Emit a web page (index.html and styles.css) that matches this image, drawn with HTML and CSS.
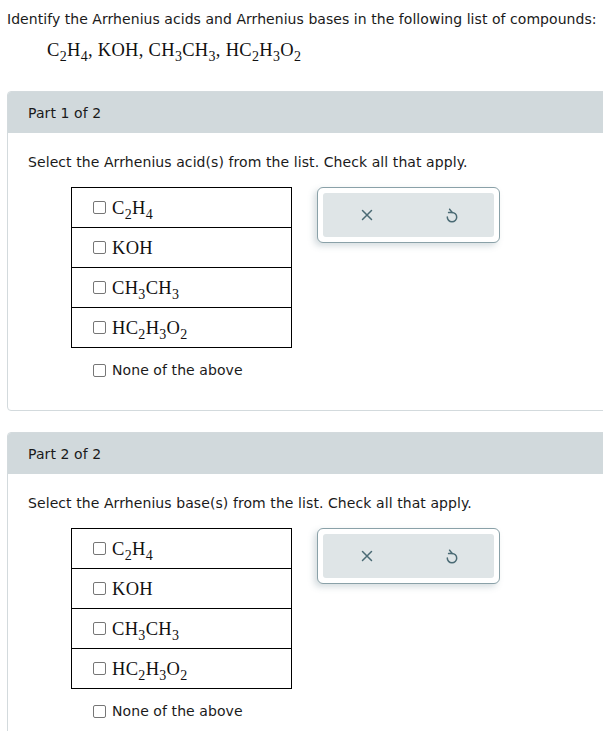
FILE: index.html
```html
<!DOCTYPE html>
<html>
<head>
<meta charset="utf-8">
<link rel="stylesheet" href="styles.css">
</head>
<body>
<div class="intro">
  <p class="title">Identify the Arrhenius acids and Arrhenius bases in the following list of compounds:</p>
  <p class="formula">C<sub>2</sub>H<sub>4</sub>, KOH, CH<sub>3</sub>CH<sub>3</sub>, HC<sub>2</sub>H<sub>3</sub>O<sub>2</sub></p>
</div>

<section class="panel">
  <div class="panel-head">Part 1 of 2</div>
  <div class="panel-body">
    <p class="question">Select the Arrhenius acid(s) from the list. Check all that apply.</p>
    <div class="answer-row">
      <div class="choices">
        <div class="choice"><span class="box"></span><span class="chem">C<sub>2</sub>H<sub>4</sub></span></div>
        <div class="choice"><span class="box"></span><span class="chem">KOH</span></div>
        <div class="choice"><span class="box"></span><span class="chem">CH<sub>3</sub>CH<sub>3</sub></span></div>
        <div class="choice"><span class="box"></span><span class="chem">HC<sub>2</sub>H<sub>3</sub>O<sub>2</sub></span></div>
      </div>
      <div class="tools">
        <div class="tools-inner">
          <svg class="icon" viewBox="0 0 16 16" width="16" height="16"><path d="M3.5 3.5 L12.5 12.5 M12.5 3.5 L3.5 12.5" stroke="#4a6a74" stroke-width="1.5" fill="none" stroke-linecap="round"/></svg>
          <svg class="icon" viewBox="0 0 16 16" width="16" height="16"><path d="M8 5.4 A4.7 4.7 0 1 1 3.3 10" stroke="#4a6a74" stroke-width="1.5" fill="none" stroke-linecap="round"/><path d="M5.6 2.2 L8.2 5.4 L4.6 5.6" stroke="#4a6a74" stroke-width="1.5" fill="none" stroke-linecap="round" stroke-linejoin="round"/></svg>
        </div>
      </div>
    </div>
    <div class="none"><span class="box"></span><span>None of the above</span></div>
  </div>
</section>

<section class="panel">
  <div class="panel-head">Part 2 of 2</div>
  <div class="panel-body">
    <p class="question">Select the Arrhenius base(s) from the list. Check all that apply.</p>
    <div class="answer-row">
      <div class="choices">
        <div class="choice"><span class="box"></span><span class="chem">C<sub>2</sub>H<sub>4</sub></span></div>
        <div class="choice"><span class="box"></span><span class="chem">KOH</span></div>
        <div class="choice"><span class="box"></span><span class="chem">CH<sub>3</sub>CH<sub>3</sub></span></div>
        <div class="choice"><span class="box"></span><span class="chem">HC<sub>2</sub>H<sub>3</sub>O<sub>2</sub></span></div>
      </div>
      <div class="tools">
        <div class="tools-inner">
          <svg class="icon" viewBox="0 0 16 16" width="16" height="16"><path d="M3.5 3.5 L12.5 12.5 M12.5 3.5 L3.5 12.5" stroke="#4a6a74" stroke-width="1.5" fill="none" stroke-linecap="round"/></svg>
          <svg class="icon" viewBox="0 0 16 16" width="16" height="16"><path d="M8 5.4 A4.7 4.7 0 1 1 3.3 10" stroke="#4a6a74" stroke-width="1.5" fill="none" stroke-linecap="round"/><path d="M5.6 2.2 L8.2 5.4 L4.6 5.6" stroke="#4a6a74" stroke-width="1.5" fill="none" stroke-linecap="round" stroke-linejoin="round"/></svg>
        </div>
      </div>
    </div>
    <div class="none"><span class="box"></span><span>None of the above</span></div>
  </div>
</section>
</body>
</html>
```

FILE: styles.css
```css
html, body {
  margin: 0;
  padding: 0;
  overflow: hidden;
  background: #fff;
}
body {
  font-family: "DejaVu Sans", Verdana, sans-serif;
  font-size: 14px;
  letter-spacing: 0.08px;
  color: #1a1a1a;
  line-height: 20px;
}
p { margin: 0; }

.intro {
  padding: 9px 0 0 7px;
}
.title {
  white-space: nowrap;
  letter-spacing: 0.05px;
}
.formula {
  font-family: "Liberation Serif", "Times New Roman", serif;
  font-size: 18.5px;
  letter-spacing: 0.3px;
  line-height: 24px;
  padding-left: 40px;
  margin-top: 9px;
  color: #111;
}
sub {
  font-size: 14px;
  vertical-align: -5px;
  line-height: 0;
}

.panel {
  margin: 29px -6px 21px 7px;
  border: 1px solid #d3dadd;
  border-radius: 4px;
  overflow: hidden;
}
.panel + .panel { margin-top: 0; }
.panel-head {
  background: #d1d9dc;
  height: 41px;
  line-height: 42px;
  padding-left: 20px;
}
.panel-body {
  padding: 19px 20px 30px 20px;
}
.answer-row {
  display: flex;
  align-items: flex-start;
  gap: 25px;
  margin: 15px 0 0 43px;
}
.choices {
  width: 219px;
  border: 1px solid #000;
}
.choice {
  height: 39px;
  display: flex;
  align-items: center;
  padding-left: 21px;
  border-bottom: 1px solid #000;
}
.choice:last-child { border-bottom: 0; }
.box {
  width: 11px;
  height: 11px;
  border: 1px solid #767676;
  border-radius: 2px;
  background: #fff;
  flex: none;
  margin-right: 6px;
}
.chem {
  font-family: "Liberation Serif", "Times New Roman", serif;
  font-size: 18.5px;
  letter-spacing: 0.3px;
  color: #111;
}
.tools {
  width: 183px;
  height: 56px;
  border: 1px solid #8aa1a8;
  border-radius: 6px;
  background: #fff;
  box-shadow: -3px 3px 6px rgba(90, 120, 130, 0.25);
  padding: 5px;
  box-sizing: border-box;
  display: flex;
}
.tools-inner {
  flex: 1;
  background: #dfe5e7;
  border-radius: 3px;
  display: flex;
  align-items: center;
  justify-content: space-around;
  padding-left: 2px;
}
.none {
  display: flex;
  align-items: center;
  margin: 12px 0 0 65px;
}
```
